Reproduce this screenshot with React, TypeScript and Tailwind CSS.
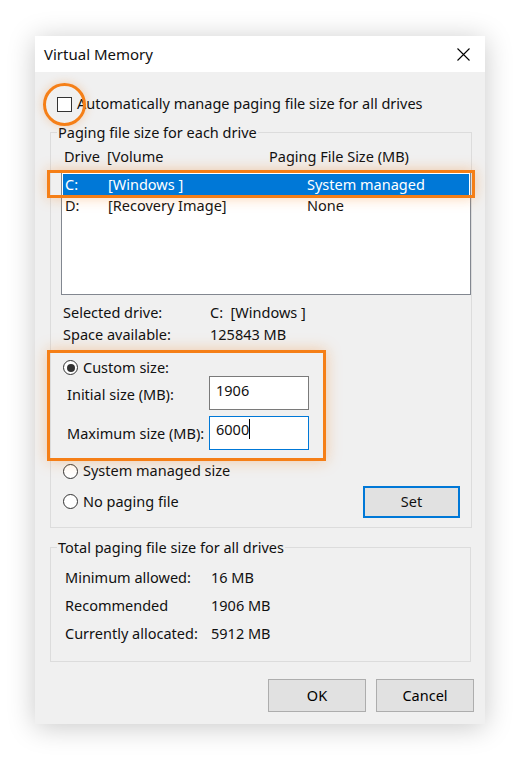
import React from 'react';

const font = { fontFamily: '"Noto Sans", "Open Sans", sans-serif' };

const Radio = ({ checked }: { checked?: boolean }) => (
    <span className="w-[15px] h-[15px] rounded-full border border-[#333] bg-white flex items-center justify-center shrink-0">
        {checked && <span className="w-[8px] h-[8px] rounded-full bg-[#333]" />}
    </span>
);

const Button = ({ label, focused }: { label: string; focused?: boolean }) => (
    <button
        className={`w-[98px] h-[33px] bg-[#e1e1e1] text-[14.5px] text-black ${focused ? 'border-2 border-[#0078d7]' : 'border border-[#adadad]'}`}
    >
        {label}
    </button>
);

export default function App() {
    return (
        <div className="min-h-[761px] bg-white pt-[36px] pl-[35px] text-[#111]" style={font}>
            <div className="relative w-[450px] bg-[#f0f0f0] shadow-[0_3px_26px_rgba(0,0,0,0.22)]">
                {/* title bar */}
                <div className="h-[36px] bg-white flex items-center justify-between pl-[9px] pr-[15px]">
                    <span className="text-[15px] text-[#111]">Virtual Memory</span>
                    <svg width="13" height="13" viewBox="0 0 13 13">
                        <path d="M0.5 0.5 L12.5 12.5 M12.5 0.5 L0.5 12.5" stroke="#000" strokeWidth="1.1" />
                    </svg>
                </div>

                <div className="pl-[15px] pr-[14px] pt-[22px] pb-[12px] text-[14.5px]">
                    <div className="h-[20px] flex items-center pl-[7px] gap-[5px]">
                        <span className="w-[15px] h-[15px] border border-[#333] bg-white shrink-0" />
                        <span>Automatically manage paging file size for all drives</span>
                    </div>

                    <fieldset className="mt-[8px] w-[421px] border border-[#dcdcdc] pb-[10px]">
                        <legend className="ml-[6px] px-[1px] leading-[20px]">Paging file size for each drive</legend>

                        <div className="mt-[5px] h-[20px] flex items-center pl-[13px]">
                            <span className="w-[43px]">Drive</span>
                            <span className="w-[162px]">[Volume</span>
                            <span>Paging File Size (MB)</span>
                        </div>

                        <div className="mt-[5px] ml-[10px] w-[410px] h-[123px] border border-[#828790] bg-white p-[1px]">
                            <div className="h-[21px] flex items-center pl-[2px] bg-[#0078d7] text-white">
                                <span className="w-[43px]">C:</span>
                                <span className="w-[199px]">[Windows ]</span>
                                <span>System managed</span>
                            </div>
                            <div className="h-[21px] flex items-center pl-[2px]">
                                <span className="w-[43px]">D:</span>
                                <span className="w-[199px]">[Recovery Image]</span>
                                <span>None</span>
                            </div>
                        </div>

                        <div className="mt-[7px] pl-[12px]">
                            <div className="h-[22px] flex items-center">
                                <span className="w-[147px]">Selected drive:</span>
                                <span className="whitespace-pre">C:  [Windows ]</span>
                            </div>
                            <div className="h-[22px] flex items-center">
                                <span className="w-[147px]">Space available:</span>
                                <span>125843 MB</span>
                            </div>
                        </div>

                        <div className="mt-[12px] h-[19px] pl-[12px] flex items-center gap-[5px]">
                            <Radio checked />
                            <span>Custom size:</span>
                        </div>

                        <div className="mt-[-1px] h-[34px] pl-[16px] flex items-center">
                            <span className="w-[142px] pt-[3px]">Initial size (MB):</span>
                            <div className="w-[100px] h-[34px] border border-[#7a7a7a] bg-white pl-[6px] pt-[3px] leading-[20px]">1906</div>
                        </div>

                        <div className="mt-[6px] h-[34px] pl-[16px] flex items-center">
                            <span className="w-[142px] pt-[2px]">Maximum size (MB):</span>
                            <div className="w-[100px] h-[34px] border border-[#0078d7] bg-white pl-[6px] pt-[2px] leading-[20px] flex items-start">
                                <span>6000</span>
                                <span className="w-[1px] h-[20px] bg-black" />
                            </div>
                        </div>

                        <div className="mt-[11px] h-[20px] pl-[12px] flex items-center gap-[5px]">
                            <Radio />
                            <span>System managed size</span>
                        </div>

                        <div className="mt-[5px] h-[31px] pl-[12px] pr-[11px] flex items-center justify-between">
                            <div className="flex items-center gap-[5px]">
                                <Radio />
                                <span>No paging file</span>
                            </div>
                            <button className="w-[97px] h-[32px] bg-[#e1e1e1] border-2 border-[#0078d7]">Set</button>
                        </div>
                    </fieldset>

                    <fieldset className="mt-[9px] w-[421px] border border-[#dcdcdc] pb-[13px]">
                        <legend className="ml-[6px] px-[1px] leading-[20px]">Total paging file size for all drives</legend>
                        <div className="mt-[7px] pl-[14px]">
                            {[
                                ['Minimum allowed:', '16 MB'],
                                ['Recommended', '1906 MB'],
                                ['Currently allocated:', '5912 MB'],
                            ].map(([k, v]) => (
                                <div key={k} className="h-[28px] flex items-center">
                                    <span className="w-[146px]">{k}</span>
                                    <span>{v}</span>
                                </div>
                            ))}
                        </div>
                    </fieldset>

                    <div className="mt-[17px] flex justify-end gap-[10px] mr-[-3px]">
                        <Button label="OK" />
                        <Button label="Cancel" />
                    </div>
                </div>

                {/* orange annotations */}
                <div className="absolute left-[8px] top-[47px] w-[43px] h-[43px] rounded-full border-[3px] border-[#f57f17] shadow-[0_0_10px_rgba(245,127,23,0.3)]" />
                <div className="absolute left-[12px] top-[134px] w-[428px] h-[28px] border-[3px] border-[#f57f17] shadow-[0_0_14px_rgba(245,127,23,0.35)]" />
                <div className="absolute left-[12px] top-[314px] w-[279px] h-[111px] border-[3px] border-[#f57f17] shadow-[0_0_14px_rgba(245,127,23,0.35)]" />
            </div>
        </div>
    );
}
